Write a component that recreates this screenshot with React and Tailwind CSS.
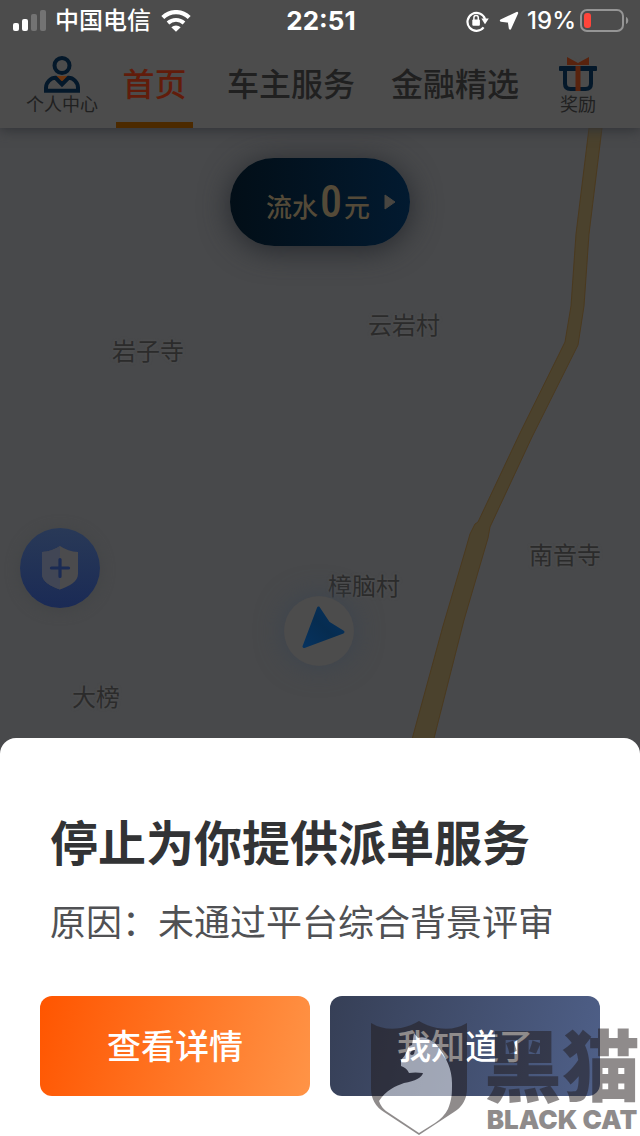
const places = [
  { name: "岩子寺", position: "left-[112px] top-[204px]" },
  { name: "云岩村", position: "left-[368px] top-[178px]" },
  { name: "南音寺", position: "left-[529px] top-[408px]" },
  { name: "樟脑村", position: "left-[328px] top-[439px]" },
  { name: "大榜", position: "left-[72px] top-[550px]" },
];

function StatusBar() {
  return (
    <div className="grid h-10 grid-cols-[1fr_auto_1fr] items-center pt-0.5 pr-[11px] pl-[13px] font-['Inter','Noto_Sans_CJK_SC',sans-serif] text-2xl text-white">
      <div className="flex items-center gap-2">
        <svg width="34" height="22" viewBox="0 0 34 22" fill="#fff">
          <rect x="0" y="13" width="6" height="8" rx="2" />
          <rect x="9" y="9" width="6" height="12" rx="2" />
          <rect x="18" y="4" width="6" height="17" rx="2" opacity="0.22" />
          <rect x="27" y="0" width="6" height="21" rx="2" opacity="0.22" />
        </svg>
        <span className="font-medium">中国电信</span>
        <svg className="ml-0.5" width="30" height="22" viewBox="0 0 30 22" fill="none">
          <path d="M1.8 7.4a19 19 0 0 1 26.4 0" stroke="#fff" strokeWidth="4.2" />
          <path d="M7 13a11.6 11.6 0 0 1 16 0" stroke="#fff" strokeWidth="3.8" />
          <path d="M10.3 17.2a7 7 0 0 1 9.4 0L15 21.8z" fill="#fff" />
        </svg>
      </div>
      <span className="text-[26px] font-bold">22:51</span>
      <div className="flex items-center justify-end">
        <svg width="23" height="22" viewBox="0 0 23 22" fill="none">
          <path d="M17.6 17.4A9 9 0 1 1 19 9" stroke="#fff" strokeWidth="2.2" />
          <path d="M15.4 8.6h7.4l-3.8 5.6z" fill="#fff" />
          <rect x="6.3" y="9.4" width="7.6" height="6.4" rx="1" fill="#fff" />
          <path d="M7.9 10V7.8a2.2 2.2 0 0 1 4.4 0V10" stroke="#fff" strokeWidth="1.5" />
        </svg>
        <svg className="ml-2.5" width="20" height="20" viewBox="0 0 20 20" fill="#fff">
          <path d="M18 2L11 17.4L10 10.5L2 9.500Z" stroke="#fff" strokeWidth="2.400" strokeLinejoin="round" />
        </svg>
        <span className="ml-2 font-medium">19%</span>
        <svg className="ml-1" width="49" height="24" viewBox="0 0 49 24" fill="none">
          <rect x="1" y="1" width="42" height="21" rx="6" stroke="#959595" strokeWidth="2" />
          <rect x="4" y="4" width="7" height="15" rx="3" fill="#ff453a" />
          <path d="M46 8c3 1 3 6 0 7z" fill="#959595" />
        </svg>
      </div>
    </div>
  );
}

function TopNav() {
  return (
    <div className="flex h-22 items-stretch pr-11 pl-[26px] text-[#202020]">
      <a href="#profile" className="flex flex-col items-center pt-4 text-lg leading-none">
        <svg width="36" height="38" viewBox="0 0 36 38" fill="none">
          <path d="M12 20h12l-6 8z" fill="#6b3510" />
          <circle cx="18" cy="9.5" r="7.5" stroke="#04182a" strokeWidth="4" />
          <path
            d="M2 34.8v-3C2 26 7 21.8 11.5 21.8L18 28.5l6.5-6.7C29 21.8 34 26 34 31.8v3z"
            stroke="#04182a"
            strokeWidth="4"
          />
        </svg>
        <span>个人中心</span>
      </a>
      <nav className="ml-[18px] flex items-stretch gap-9 text-[32px] leading-[84px] font-medium">
        <a href="#home" className="-mr-0.5 flex w-[77px] justify-center border-b-6 border-[#4c2a00] text-[#611c0b]">
          首页
        </a>
        <a href="#services">车主服务</a>
        <a href="#finance">金融精选</a>
      </nav>
      <a href="#rewards" className="ml-auto flex flex-col items-center pt-4 text-lg leading-none">
        <svg className="-mx-1" width="38" height="38" viewBox="0 0 38 38" fill="none">
          <path d="M8 1l11 6 11-6v8H8z" fill="#58230e" />
          <path d="M15 1h8l-4 5z" fill="#4c4c4c" />
          <path d="M6 12v15.5q0 5.5 5.5 5.5h15q5.5 0 5.5-5.5V12" stroke="#04182a" strokeWidth="4" />
          <rect x="0" y="10" width="38" height="5" rx="1" fill="#04182a" />
          <rect x="16.5" y="10" width="5" height="25" fill="#58230e" />
        </svg>
        <span>奖励</span>
      </a>
    </div>
  );
}

function MapView() {
  return (
    <main className="relative min-h-[626px] flex-1 overflow-hidden bg-[#48494b]">
      <svg
        className="absolute inset-0 h-full w-full"
        viewBox="0 0 640 626"
        preserveAspectRatio="xMidYMin slice"
      >
        <path
          d="M589 0L576 106L571 178L565 214L520 305L478 394L475 396L470 406L466 420L443 498L408 626H430L464 492L488 410L490 399L532 309L578 217L584 178L589 106L602 0Z"
          fill="#4b422d"
          stroke="#4b3a1f"
        />
      </svg>
      {places.map((place) => (
        <span
          key={place.name}
          className={`absolute text-2xl leading-9 text-[#2b2b2b] [text-shadow:0_0_3px_#545454] ${place.position}`}
        >
          {place.name}
        </span>
      ))}

      <button className="absolute top-[30px] left-1/2 flex h-22 w-45 -translate-x-1/2 items-center rounded-full bg-linear-to-r from-[#020e17] to-[#021a30] pl-9 text-[#544a38] shadow-[0_4px_30px_#25282d]">
        <span className="flex items-baseline text-[26px] leading-none font-medium">
          流水
          <span className="mx-0.5 font-['Roboto_Condensed',Roboto,sans-serif] text-[44px] leading-none font-medium">
            0
          </span>
          元
        </span>
        <svg className="ml-3.5" width="12" height="16" viewBox="0 0 12 16" fill="#494641">
          <path d="M1 1l10 7-10 7z" stroke="#494641" strokeLinejoin="round" />
        </svg>
      </button>

      <button
        aria-label="安全中心"
        className="absolute top-[400px] left-5 flex size-20 items-center justify-center rounded-full bg-linear-to-b from-[#293957] to-[#1a2a55] shadow-[0_2px_14px_#424446]"
      >
        <svg width="36" height="44" viewBox="0 0 36 44">
          <path d="M18 0q8 5.5 18 6v22c0 8-9 12-18 15.5C9 40 0 36 0 28V6q10-.5 18-6z" fill="#4b4b4d" />
          <path d="M18 0v43.5C9 40 0 36 0 28V6q10-.5 18-6z" fill="#414655" />
          <path d="M18 13.5v17M9.5 22h17" stroke="#1b2b54" strokeWidth="3.2" strokeLinecap="round" />
        </svg>
      </button>

      <div className="absolute top-[468px] left-[284px] flex size-[70px] items-center justify-center rounded-full bg-[#4c4c4c] shadow-[0_0_28px_#3b444f]">
        <svg width="70" height="70" viewBox="0 0 70 70">
          <defs>
            <linearGradient id="heading" x1="0" y1="1" x2="1" y2="0">
              <stop offset="0" stopColor="#06325e" />
              <stop offset="0.5" stopColor="#062c50" />
              <stop offset="1" stopColor="#06325e" />
            </linearGradient>
          </defs>
          <path
            d="M34.5 12L44.5 27L59 36L20 50.5Z"
            fill="url(#heading)"
            stroke="url(#heading)"
            strokeWidth="3"
            strokeLinejoin="round"
          />
        </svg>
      </div>
    </main>
  );
}

function Watermark() {
  return (
    <div className="pointer-events-none absolute right-0 bottom-0 flex items-end gap-4 opacity-50">
      <svg width="98" height="116" viewBox="0 0 98 116">
        <path
          d="M1 3Q14 11 31 8Q41 6 49 1Q57 6 67 8Q84 11 97 3V68Q97 84 84 92L49 115L14 92Q1 84 1 68Z"
          fill="#211a1a"
        />
        <path
          d="M44 13L48 18Q53 16 58 19L60 20L65 23C77 37 82 50 82 63C82 74 82 79 78 89Q74 97 65 103L49 113L16 91Q11 87 9 81C16 70 26 66 34 63Q51 60 53 53Q45 52 39 53Q37 48 31 46L31 40Q35 36 37 31Q38 26 42 25Z"
          fill="#fff"
        />
        <path d="M40 34q1-4 5-4l-1 4q-2 2-4 0z" fill="#211a1a" />
      </svg>
      <div className="flex flex-col items-center text-[#211a1a]">
        <span className="font-['Noto_Sans_CJK_SC',sans-serif] text-[78px] leading-[84px] font-black">黑猫</span>
        <span className="font-['Inter',sans-serif] text-[26px] leading-8 font-black">BLACK CAT</span>
      </div>
    </div>
  );
}

function StopServiceSheet() {
  return (
    <section
      role="dialog"
      aria-labelledby="sheet-title"
      className="relative -mt-4 rounded-t-2xl bg-white px-10 pt-[66px] pb-10"
    >
      <h1 id="sheet-title" className="px-2.5 text-5xl leading-[72px] font-bold text-[#323335]">
        停止为你提供派单服务
      </h1>
      <p className="mt-4 px-2.5 text-4xl leading-[56px] text-[#505154]">
        原因：未通过平台综合背景评审
      </p>
      <div className="mt-12 grid grid-cols-2 gap-5 text-[34px] font-medium text-white">
        <button className="h-25 rounded-xl bg-linear-[105deg] from-[#ff5500] to-[#ff9447] pb-1">查看详情</button>
        <button className="h-25 rounded-xl bg-linear-[105deg] from-[#363f56] to-[#4f6089] pb-1">我知道了</button>
      </div>
      <Watermark />
    </section>
  );
}

export default function App() {
  return (
    <div className="flex min-h-screen flex-col bg-[#48494b] font-['Noto_Sans_CJK_SC',sans-serif]">
      <header className="relative z-10 bg-[#4c4c4c] shadow-[0_2px_12px_#303236]">
        <StatusBar />
        <TopNav />
      </header>
      <MapView />
      <StopServiceSheet />
    </div>
  );
}
